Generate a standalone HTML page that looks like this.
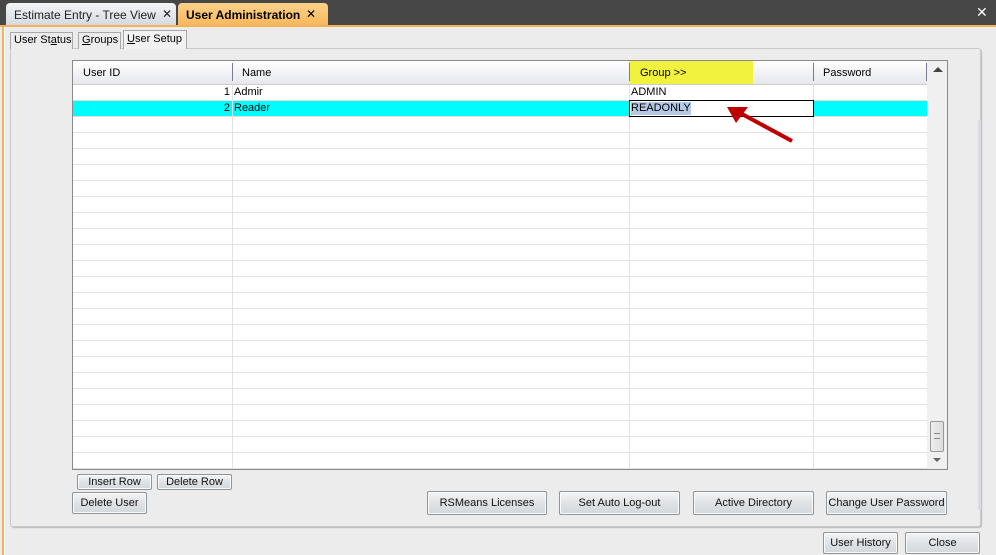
<!DOCTYPE html>
<html><head><style>
*{margin:0;padding:0;box-sizing:border-box}
body{width:996px;height:555px;background:#ececec;font-family:"Liberation Sans",sans-serif;font-size:11px;position:relative;overflow:hidden;color:#000;white-space:nowrap}
.a{position:absolute}
.btn{position:absolute;border:1px solid #8e959b;border-radius:2px;background:linear-gradient(#f4f5f6,#dfe3e6 50%,#d3d8dc);text-align:center;font-size:11px;color:#111;box-shadow:inset 0 0 0 1px #fbfbfb;white-space:nowrap;overflow:hidden}
.tab{position:absolute;top:3px;height:23px;border-radius:4px 4px 0 0;font-size:12px;padding-top:5px;white-space:nowrap}
.st{position:absolute;top:32px;height:17px;border:1px solid #a8a8a8;border-bottom:none;background:#ececec;font-size:11px;padding:1px 3px 0;white-space:nowrap}
.hd{position:absolute;top:61px;height:23px;font-size:11px;padding-top:6px}
.vl{position:absolute;top:85px;width:1px;height:384px;background:#e2e2e2}
</style></head><body>
<div class="a" style="left:0;top:0;width:996px;height:26px;background:#474747"></div>
<div class="tab" style="left:6px;width:170px;background:linear-gradient(#f4f5f7,#d4d8de);color:#222;padding-left:8px">Estimate Entry - Tree View<span style="position:absolute;left:156px;top:4px">✕</span></div>
<div class="tab" style="left:178px;width:150px;background:linear-gradient(#fcd28a,#f8b75a);font-weight:bold;padding-left:8px">User Administration<span style="position:absolute;left:128px;top:4px;font-weight:normal">✕</span></div>
<div class="a" style="left:976px;top:4px;color:#fff;font-size:14px">✕</div>
<div class="a" style="left:0;top:25px;width:996px;height:2px;background:#f6b056"></div>
<div class="a" style="left:2px;top:26px;width:2px;height:529px;background:#f6b056"></div>
<div class="a" style="left:4px;top:27px;width:1px;height:528px;background:#fff"></div>
<div class="a" style="left:10px;top:48px;width:971px;height:479px;border:1px solid #c9c9c9;border-radius:0 3px 3px 3px;background:#ececec;box-shadow:1px 1px 1px #bbb"></div>
<div class="st" style="left:10px;width:63px">User St<u>a</u>tus</div>
<div class="st" style="left:78px;width:43px"><u>G</u>roups</div>
<div class="st" style="left:123px;top:30px;height:19px;width:64px;background:#f2f2f2;padding-top:2px"><u>U</u>ser Setup</div>
<div class="a" style="left:978px;top:120px;width:3px;height:390px;background:#d8dbe0"></div>
<div class="a" style="left:72px;top:60px;width:876px;height:410px;border:1px solid #8a8a8a;background:#fff"></div>
<div class="a" style="left:73px;top:61px;width:854px;height:24px;background:linear-gradient(#fff,#e6e8ec);border-bottom:1px solid #ccc"></div>
<div class="a" style="left:629px;top:61px;width:124px;height:23px;background:#f1f23e"></div>
<div class="hd" style="left:83px">User ID</div>
<div class="a" style="left:232px;top:63px;width:1px;height:18px;background:#7a7a99"></div>
<div class="hd" style="left:242px">Name</div>
<div class="a" style="left:629px;top:63px;width:1px;height:18px;background:#7a7a99"></div>
<div class="hd" style="left:640px">Group &gt;&gt;</div>
<div class="a" style="left:813px;top:63px;width:1px;height:18px;background:#7a7a99"></div>
<div class="hd" style="left:823px">Password</div>
<div class="a" style="left:926px;top:63px;width:1px;height:18px;background:#7a7a99"></div>
<div class="a" style="left:73px;top:85px;width:854px;height:384px;background:repeating-linear-gradient(#fff 0 15px,#e2e2e2 15px 16px)"></div>
<div class="a" style="left:73px;top:101px;width:854px;height:15px;background:#00fdfd"></div>
<div class="vl" style="left:232px"></div><div class="vl" style="left:629px"></div><div class="vl" style="left:813px"></div>
<div class="a" style="left:200px;top:86px;width:30px;text-align:right">1</div>
<div class="a" style="left:234px;top:86px">Admir</div>
<div class="a" style="left:631px;top:86px">ADMIN</div>
<div class="a" style="left:200px;top:102px;width:30px;text-align:right">2</div>
<div class="a" style="left:234px;top:102px">Reader</div>
<div class="a" style="left:629px;top:100px;width:185px;height:17px;border:1px solid #000;background:#fff"></div>
<div class="a" style="left:631px;top:102px;background:#b4c9e6;line-height:13px">READONLY</div>
<div class="a" style="left:927px;top:61px;width:20px;height:408px;background:#f0f0f0"></div>
<div class="a" style="left:933px;top:67px;width:0;height:0;border:5px solid transparent;border-bottom:5px solid #444;border-top:none"></div>
<div class="a" style="left:930px;top:421px;width:14px;height:31px;border:1px solid #999;border-radius:2px;background:linear-gradient(90deg,#eee,#ddd)"></div>
<div class="a" style="left:934px;top:433px;width:6px;height:6px;border-top:1px solid #888;border-bottom:1px solid #888"></div>
<div class="a" style="left:933px;top:458px;width:0;height:0;border:4px solid transparent;border-top:4px solid #666;border-bottom:none"></div>
<svg class="a" style="left:0;top:0" width="996" height="555"><line x1="792" y1="141" x2="742" y2="114" stroke="#c00000" stroke-width="4"/><polygon points="727,107 748,107 736,123" fill="#c00000"/></svg>
<div class="btn" style="left:77px;top:474px;width:75px;height:16px;line-height:14px">Insert Row</div>
<div class="btn" style="left:157px;top:474px;width:75px;height:16px;line-height:14px">Delete Row</div>
<div class="btn" style="left:72px;top:492px;width:75px;height:22px;line-height:20px">Delete User</div>
<div class="btn" style="left:427px;top:491px;width:120px;height:24px;line-height:22px">RSMeans Licenses</div>
<div class="btn" style="left:559px;top:491px;width:121px;height:24px;line-height:22px">Set Auto Log-out</div>
<div class="btn" style="left:693px;top:491px;width:121px;height:24px;line-height:22px">Active Directory</div>
<div class="btn" style="left:826px;top:491px;width:121px;height:24px;line-height:22px">Change User Password</div>
<div class="btn" style="left:823px;top:532px;width:75px;height:22px;line-height:20px">User History</div>
<div class="btn" style="left:905px;top:532px;width:75px;height:22px;line-height:20px">Close</div>
</body></html>
